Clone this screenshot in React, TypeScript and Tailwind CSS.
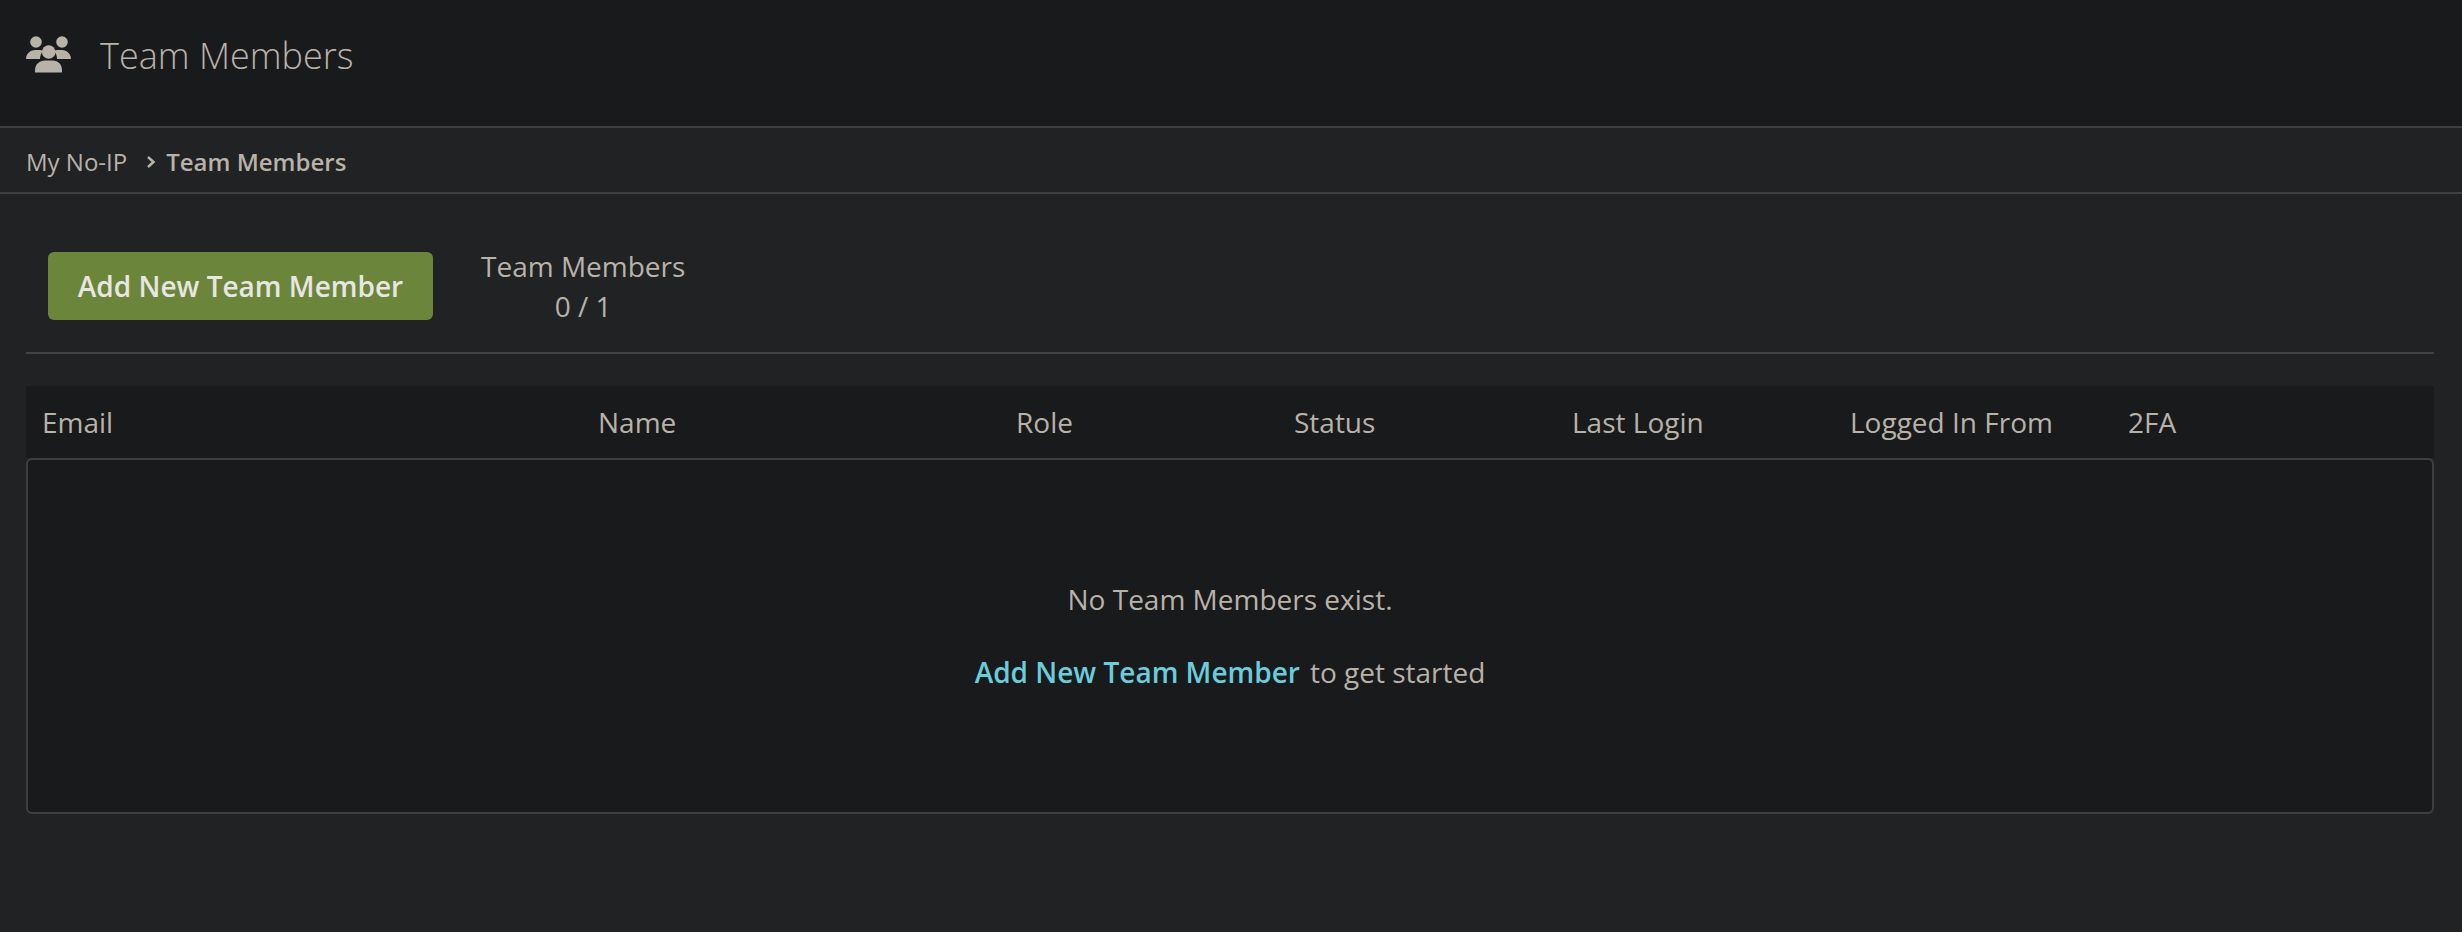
const columns = ["Email", "Name", "Role", "Status", "Last Login", "Logged In From", "2FA"];

const TeamIcon = () => (
  <svg width="46" height="38" viewBox="26 37 46 38" fill="#b8b2a9">
    <circle cx="36" cy="43" r="5.8" />
    <circle cx="62" cy="43" r="5.8" />
    <path d="M26 60c0-5 4-9 9-9h4c1.500 0 3 .4 4 1-2 2-3 5-3 8z" />
    <path d="M71 60c0-5-4-9-9-9h-4c-1.500 0-3 .4-4 1 2 2 3 5 3 8z" />
    <circle cx="48.700" cy="53" r="6.800" />
    <path d="M35 73.500v-2.500c0-5.500 4.500-9.500 10-9.500h7.500c5.500 0 9.500 4 9.500 9.500v2.500z" />
  </svg>
);

export default function App() {
  return (
    <div className="h-[932px] bg-[#202224] text-[#b8b2a9] font-['Open_Sans',sans-serif] overflow-hidden">
      {/* Header */}
      <div className="h-[128px] bg-[#191a1c] border-b-2 border-[#3d4042] flex items-center pl-[26px] pb-[16px]">
        <TeamIcon />
        <h1 className="ml-[28px] mt-[2px] text-[36px] font-light">Team Members</h1>
      </div>

      {/* Breadcrumb */}
      <div className="h-[66px] border-b-2 border-[#3d4042] flex items-center pl-[26px] pt-[3px] text-[24px]">
        <span>My No-IP</span>
        <svg className="ml-[19px] mr-[10px]" width="10" height="16" viewBox="0 0 10 16" fill="none" stroke="#b8b2a9" strokeWidth="2.500">
          <path d="M2 3l5.500 5-5.500 5" />
        </svg>
        <span className="font-semibold">Team Members</span>
      </div>

      {/* Content */}
      <div className="pl-[26px] pr-[28px] pt-[58px]">
        <div className="flex items-center h-[102px] border-b-2 border-[#3f4446] pb-[32px]">
          <button className="ml-[22px] w-[385px] h-[68px] rounded-[6px] bg-[#6b853a] text-[#e8e6e3] text-[28px] font-semibold">
            Add New Team Member
          </button>
          <div className="ml-[48px] text-center text-[28px] leading-[40px]">
            <div>Team Members</div>
            <div>0 / 1</div>
          </div>
        </div>

        <div className="mt-[32px] h-[72px] bg-[#191a1c] grid grid-cols-[556px_418px_278px_278px_278px_278px_1fr] items-center pl-[16px] text-[28px]">
          {columns.map((col) => (
            <div key={col}>{col}</div>
          ))}
        </div>

        <div className="h-[356px] bg-[#191a1c] border-2 border-[#3d4042] rounded-[6px] flex flex-col items-center justify-center pb-[2px] text-[28px]">
          <p>No Team Members exist.</p>
          <p className="mt-[31px]">
            <a className="text-[#6bccdc] font-semibold">Add New Team Member</a>
            <span className="ml-[10px]">to get started</span>
          </p>
        </div>
      </div>
    </div>
  );
}
